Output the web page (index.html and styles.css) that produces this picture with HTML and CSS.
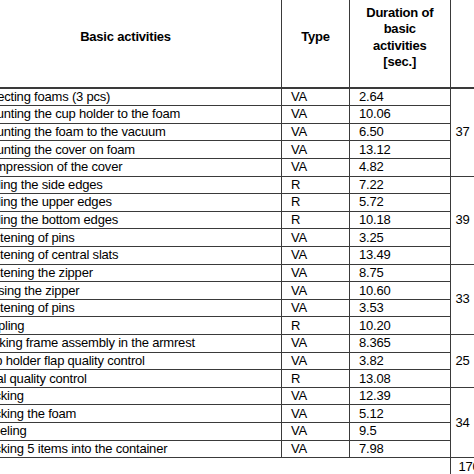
FILE: index.html
```html
<!DOCTYPE html>
<html>
<head>
<meta charset="utf-8">
<link rel="stylesheet" href="styles.css">
</head>
<body>
<table class="tbl">
  <colgroup>
    <col class="c-act"><col class="c-type"><col class="c-dur"><col class="c-sum">
  </colgroup>
  <thead>
    <tr class="head">
      <th>Basic activities</th>
      <th>Type</th>
      <th>Duration of<br>basic<br>activities<br>[sec.]</th>
      <th class="sum-head"></th>
    </tr>
  </thead>
  <tbody>
    <tr><td class="act">Selecting foams (3 pcs)</td><td>VA</td><td>2.64</td><td class="sum" rowspan="5">37</td></tr>
    <tr><td class="act">Mounting the cup holder to the foam</td><td>VA</td><td>10.06</td></tr>
    <tr><td class="act">Mounting the foam to the vacuum</td><td>VA</td><td>6.50</td></tr>
    <tr><td class="act">Mounting the cover on foam</td><td>VA</td><td>13.12</td></tr>
    <tr><td class="act">Compression of the cover</td><td>VA</td><td>4.82</td></tr>
    <tr><td class="act">Nailing the side edges</td><td>R</td><td>7.22</td><td class="sum" rowspan="5">39</td></tr>
    <tr><td class="act">Nailing the upper edges</td><td>R</td><td>5.72</td></tr>
    <tr><td class="act">Nailing the bottom edges</td><td>R</td><td>10.18</td></tr>
    <tr><td class="act">Fastening of pins</td><td>VA</td><td>3.25</td></tr>
    <tr><td class="act">Fastening of central slats</td><td>VA</td><td>13.49</td></tr>
    <tr><td class="act">Fastening the zipper</td><td>VA</td><td>8.75</td><td class="sum" rowspan="4">33</td></tr>
    <tr><td class="act">Closing the zipper</td><td>VA</td><td>10.60</td></tr>
    <tr><td class="act">Fastening of pins</td><td>VA</td><td>3.53</td></tr>
    <tr><td class="act">Stapling</td><td>R</td><td>10.20</td></tr>
    <tr><td class="act">Locking frame assembly in the armrest</td><td>VA</td><td>8.365</td><td class="sum" rowspan="3">25</td></tr>
    <tr><td class="act">Cup holder flap quality control</td><td>VA</td><td>3.82</td></tr>
    <tr><td class="act">Final quality control</td><td>R</td><td>13.08</td></tr>
    <tr><td class="act">Packing</td><td>VA</td><td>12.39</td><td class="sum" rowspan="4">34</td></tr>
    <tr><td class="act">Packing the foam</td><td>VA</td><td>5.12</td></tr>
    <tr><td class="act">Labeling</td><td>VA</td><td>9.5</td></tr>
    <tr><td class="act">Packing 5 items into the container</td><td>VA</td><td>7.98</td></tr>
    <tr class="total"><td class="blank" colspan="3"></td><td class="sum total-val">170</td></tr>
  </tbody>
</table>
</body>
</html>
```

FILE: styles.css
```css
html, body {
  margin: 0;
  padding: 0;
  background: #ffffff;
  overflow: hidden;
  width: 474px;
  height: 474px;
}

.tbl {
  border-collapse: collapse;
  table-layout: fixed;
  width: 572px;
  margin-left: -31px;
  margin-top: -13px;
  font-family: "Liberation Sans", Arial, Helvetica, sans-serif;
  font-size: 13px;
  letter-spacing: -0.2px;
  color: #000;
}

.c-act { width: 312px; }
.c-type { width: 68px; }
.c-dur { width: 100.5px; }
.c-sum { width: 91.5px; }

.tbl th, .tbl td {
  border: 1px solid #3a3a3a;
  padding: 0;
}

.head th {
  height: 99px;
  font-weight: bold;
  text-align: center;
  vertical-align: middle;
  line-height: 16.4px;
  border-bottom: 2px solid #3a3a3a;
}

.tbl tbody tr {
  height: 17.62px;
}

.tbl td {
  text-align: left;
  vertical-align: middle;
  padding-left: 9px;
  line-height: 14px;
  white-space: nowrap;
}

.tbl td.act {
  padding-left: 9px;
}

.tbl td.sum {
  padding-left: 5px;
}

.total td.blank {
  border-left: none;
  border-right: 1px solid #3a3a3a;
  border-bottom: none;
}

.total td.total-val {
  padding-left: 8px;
  border-bottom: none;
}
```
